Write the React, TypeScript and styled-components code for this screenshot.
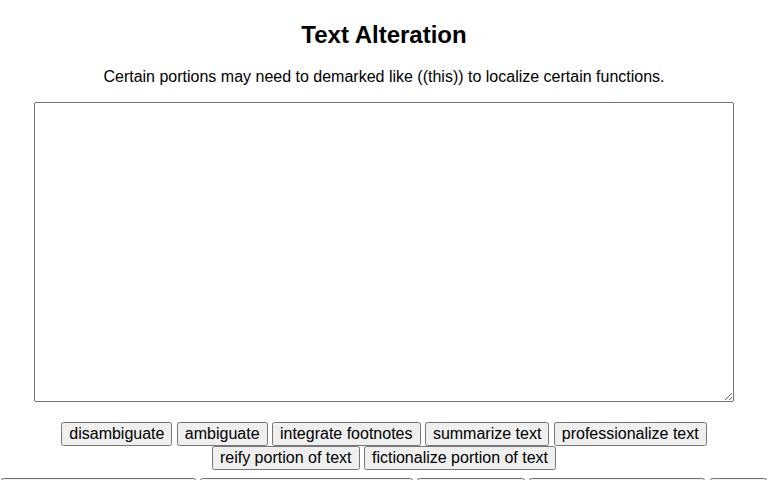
import styled, { createGlobalStyle } from "styled-components";

const GlobalStyle = createGlobalStyle`
  body {
    margin: 0;
    background: #ffffff;
    color: #000000;
    font-family: "Liberation Sans", Arial, sans-serif;
  }
`;

const MAIN_ACTIONS = [
  "disambiguate",
  "ambiguate",
  "integrate footnotes",
  "summarize text",
  "professionalize text",
  "reify portion of text",
  "fictionalize portion of text",
];

const MORE_ACTIONS = [
  "emphasize portion of text",
  "disambiguate portion of text",
  "translate text",
  "objectify portion of text",
  "revert",
];

const Page = styled.main`
  display: flex;
  flex-direction: column;
  align-items: center;
`;

const Title = styled.h1`
  margin: 21px 0 0;
  font-size: 24px;
  font-weight: bold;
  text-align: center;
`;

const Hint = styled.p`
  margin: 19px 0 16px;
  font-size: 16px;
  text-align: center;
`;

const Editor = styled.textarea`
  display: block;
  box-sizing: border-box;
  width: 700px;
  height: 300px;
  margin: 0;
`;

const ButtonRow = styled.div<{ $top: number }>`
  width: 100%;
  display: flex;
  flex-wrap: wrap;
  justify-content: center;
  column-gap: 4.4px;
  row-gap: 0;
  margin-top: ${(p) => p.$top}px;
`;

const ActionButton = styled.button`
  font-family: "Liberation Sans", Arial, sans-serif;
  font-size: 16px;
`;

const App = () => {
  return (
    <>
      <GlobalStyle />
      <Page>
        <Title>Text Alteration</Title>
        <Hint>
          Certain portions may need to demarked like ((this)) to localize
          certain functions.
        </Hint>
        <Editor />
        <ButtonRow $top={20}>
          {MAIN_ACTIONS.map((label) => (
            <ActionButton key={label}>{label}</ActionButton>
          ))}
        </ButtonRow>
        <ButtonRow $top={8}>
          {MORE_ACTIONS.map((label) => (
            <ActionButton key={label}>{label}</ActionButton>
          ))}
        </ButtonRow>
      </Page>
    </>
  );
};

export default App;
